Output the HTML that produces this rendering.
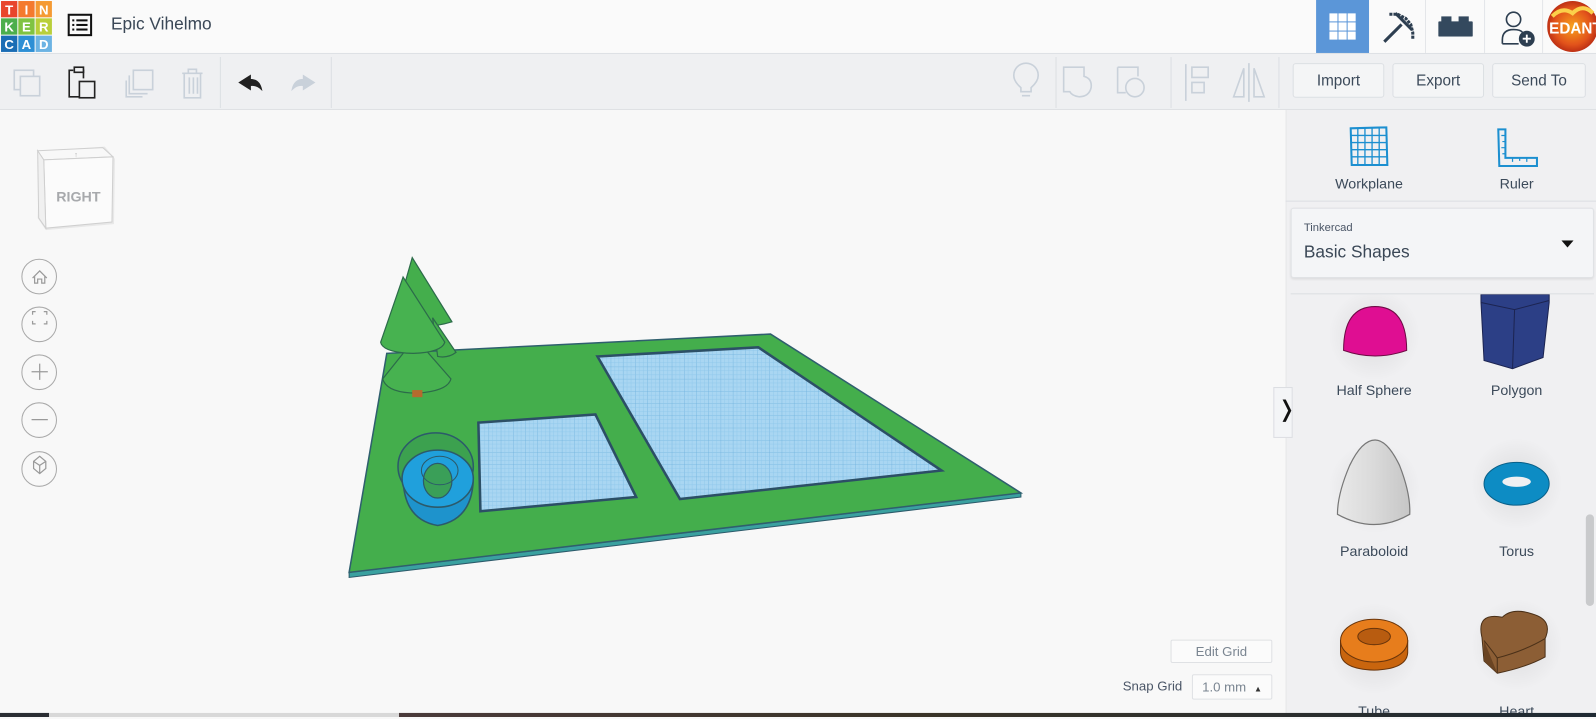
<!DOCTYPE html>
<html><head><meta charset="utf-8"><style>
html,body{margin:0;padding:0;width:1596px;height:717px;overflow:hidden;background:#f8f8f8;font-family:"Liberation Sans","DejaVu Sans",sans-serif}
#w{position:absolute;left:0;top:0;width:1568px;height:704px;transform:scale(1.017857,1.018466);transform-origin:0 0;background:#f8f8f8}
.a{position:absolute}
.btn{position:absolute;top:62px;height:34px;border:1px solid #dcdfe3;border-radius:3px;background:#f4f5f6;color:#3c4a5a;font-size:15px;text-align:center;line-height:34px;box-sizing:border-box}
.lbl{position:absolute;font-size:14px;color:#3c4a5a;text-align:center;width:140px}
.nav{position:absolute;left:21px;width:35px;height:35px;border:1px solid #a9a9a9;border-radius:50%;box-sizing:border-box}
</style></head><body><div id="w">
<!-- header -->
<div class="a" style="left:0;top:0;width:1568px;height:52px;background:#fafafa;border-bottom:1px solid #dde0e4"></div>
<svg class="a" style="left:0;top:0" width="52" height="52" font-family="Liberation Sans" font-weight="bold" font-size="13" fill="#fff" text-anchor="middle">
<rect x="1" y="1" width="16" height="16" fill="#e8452c"/><rect x="18" y="1" width="16" height="16" fill="#f47a2e"/><rect x="35" y="1" width="16" height="16" fill="#f59a33"/>
<rect x="1" y="18" width="16" height="16" fill="#4cae4c"/><rect x="18" y="18" width="16" height="16" fill="#80c342"/><rect x="35" y="18" width="16" height="16" fill="#b9cf3a"/>
<rect x="1" y="35" width="16" height="16" fill="#1a6db5"/><rect x="18" y="35" width="16" height="16" fill="#2d8fd5"/><rect x="35" y="35" width="16" height="16" fill="#6cb3e3"/>
<text x="9" y="14">T</text><text x="26" y="14">I</text><text x="43" y="14">N</text><text x="9" y="31">K</text><text x="26" y="31">E</text><text x="43" y="31">R</text><text x="9" y="48">C</text><text x="26" y="48">A</text><text x="43" y="48">D</text></svg>
<svg class="a" style="left:66px;top:13px" width="26" height="24"><rect x="1.5" y="1.5" width="22" height="20" fill="none" stroke="#111" stroke-width="2"/><g fill="#111"><rect x="5" y="6" width="2" height="2"/><rect x="9" y="6" width="11" height="2"/><rect x="5" y="10.5" width="2" height="2"/><rect x="9" y="10.5" width="11" height="2"/><rect x="5" y="15" width="2" height="2"/><rect x="9" y="15" width="11" height="2"/></g></svg>
<div class="a" style="left:109px;top:14px;font-size:17px;color:#3a4756">Epic Vihelmo</div>
<div class="a" style="left:1293px;top:0;width:52px;height:52px;background:#5b96d8"></div>
<svg class="a" style="left:1306px;top:13px" width="26" height="26" fill="#fff"><rect x="0" y="0" width="8" height="8"/><rect x="9" y="0" width="8" height="8"/><rect x="18" y="0" width="8" height="8"/><rect x="0" y="9" width="8" height="8"/><rect x="9" y="9" width="8" height="8"/><rect x="18" y="9" width="8" height="8"/><rect x="0" y="18" width="8" height="8"/><rect x="9" y="18" width="8" height="8"/><rect x="18" y="18" width="8" height="8"/></svg>
<div class="a" style="left:1400px;top:0;width:1px;height:52px;background:#e4e6e9"></div>
<div class="a" style="left:1458px;top:0;width:1px;height:52px;background:#e4e6e9"></div>
<div class="a" style="left:1515px;top:0;width:1px;height:52px;background:#e4e6e9"></div>
<svg class="a" style="left:1357px;top:10px" width="34" height="34" fill="none" stroke="#2d3e50" stroke-width="3"><path d="M3 31 L20 14"/><path d="M8 4 L16 4 L24 8 L29 14 L31 22 L31 28" stroke-dasharray="3 1"/><path d="M14 3 L30 19"/></svg>
<svg class="a" style="left:1413px;top:16px" width="34" height="20" fill="#34495e"><rect x="0" y="5" width="34" height="15" rx="1"/><rect x="3" y="0" width="10" height="7"/><rect x="20" y="0" width="10" height="7"/></svg>
<svg class="a" style="left:1474px;top:10px" width="36" height="36" fill="none" stroke="#2d3e50" stroke-width="1.6"><circle cx="13" cy="9" r="7"/><path d="M2 33 L2 29 Q2 19 13 19 Q20 19 22 22"/><path d="M2 33 L18 33"/><circle cx="26" cy="28" r="7" fill="#2d3e50"/><path d="M26 24 V32 M22 28 H30" stroke="#fff" stroke-width="1.8"/></svg>
<svg class="a" style="left:1520px;top:1px" width="50" height="50"><defs><radialGradient id="fire" cx=".5" cy=".5" r=".6"><stop offset="0" stop-color="#f7a21c"/><stop offset=".6" stop-color="#e2531b"/><stop offset="1" stop-color="#a3170f"/></radialGradient></defs><circle cx="25" cy="25" r="25" fill="url(#fire)"/><path d="M5 15 Q15 5 25 12 Q35 2 45 12" stroke="#fbd04a" stroke-width="4" fill="none"/><text x="2" y="32" font-family="Liberation Sans" font-weight="bold" font-size="15" fill="#fff">EDANT</text></svg>
<!-- toolbar -->
<div class="a" style="left:0;top:53px;width:1568px;height:54px;background:#eff0f2;border-bottom:1px solid #dfe1e4"></div>
<div class="a" style="left:216px;top:56px;width:1px;height:50px;background:#dcdfe3"></div>
<div class="a" style="left:325px;top:56px;width:1px;height:50px;background:#dcdfe3"></div>
<div class="a" style="left:1037px;top:56px;width:1px;height:50px;background:#dcdfe3"></div>
<div class="a" style="left:1150px;top:56px;width:1px;height:50px;background:#dcdfe3"></div>
<div class="a" style="left:1256px;top:56px;width:1px;height:50px;background:#dcdfe3"></div>
<svg class="a" style="left:0;top:53px" width="330" height="54" fill="none" stroke-width="1.6">
<g stroke="#c9d1da"><rect x="14" y="16" width="19" height="19"/><rect x="20" y="22" width="19" height="19" fill="#eff0f2"/></g>
<g stroke="#222"><path d="M72 16 H68 V42 H78"/><path d="M82 24 V16 H78"/><rect x="73" y="13" width="9" height="5" fill="#eff0f2"/><rect x="78" y="27" width="15" height="16"/></g>
<g stroke="#c9d1da"><rect x="131" y="16" width="19" height="19"/><path d="M127 21 V39 H145"/><path d="M124 26 V42 H140"/></g>
<g stroke="#c9d1da"><path d="M179 19 H199 M185 19 V15 H193 V19 M181 19 V43 H197 V19 M186 23 V39 M190 23 V39 M194 23 V39"/></g>
<path d="M235 28 L246 21 V25 Q255 25 257 35 Q252 30 246 31 V35 Z" fill="#222" stroke="#222" stroke-width="1"/>
<path d="M309 28 L298 21 V25 Q289 25 287 35 Q292 30 298 31 V35 Z" fill="#c9d1da" stroke="#c9d1da" stroke-width="1"/>
</svg>
<svg class="a" style="left:990px;top:53px" width="270" height="54" fill="none" stroke="#c9d1da" stroke-width="1.6">
<path d="M13 33 Q6 27 6 21 A12 12 0 0 1 30 21 Q30 27 23 33 V37 H13 Z M14 41 H22"/>
<path d="M55 13 H75 V22 Q83 24 82 33 Q80 42 70 42 Q63 41 61 37 H55 Z"/>
<path d="M108 13 H128 V22 M108 13 V38 H116"/><circle cx="125" cy="33" r="9"/>
<path d="M175 10 V46 M181 13 H197 V23 H181 Z M181 28 H193 V38 H181 Z"/>
<path d="M237 9 V47 M232 14 L222 42 H232 Z M242 14 L252 42 H242 Z"/>
</svg>
<div class="btn" style="left:1270px;width:90px">Import</div>
<div class="btn" style="left:1368px;width:90px">Export</div>
<div class="btn" style="left:1466px;width:92px">Send To</div>
<!-- sidebar -->
<div class="a" style="left:1263px;top:108px;width:305px;height:592px;background:#f0f0f2;border-left:1px solid #e6e7e9"></div>
<svg class="a" style="left:1325px;top:124px" width="40" height="40" fill="none" stroke="#1c8fd0" stroke-width="1.3"><path d="M2 2 L37 1 L38 38 L3 38 Z" stroke-width="2"/><path d="M9 2 V38 M16 2 V38 M23 1.5 V38 M30 1.5 V38 M2 9 H37 M2 16 H37 M2 23 H38 M3 30 H38"/></svg>
<svg class="a" style="left:1470px;top:125px" width="42" height="40" fill="none" stroke="#1c8fd0" stroke-width="2"><path d="M2 2 H9 V30 H40 V38 H3 Z"/><path d="M9 8 H5 M9 14 H6 M9 20 H5 M9 26 H6 M16 30 V34 M23 30 V33 M30 30 V34" stroke-width="1.2"/></svg>
<div class="lbl" style="left:1275px;top:172px">Workplane</div>
<div class="lbl" style="left:1420px;top:172px">Ruler</div>
<div class="a" style="left:1263px;top:197px;width:305px;height:1px;background:#dcdee2"></div>
<div class="a" style="left:1268px;top:204px;width:298px;height:69px;background:#f4f5f7;border:1px solid #e0e2e5;border-radius:3px;box-sizing:border-box;box-shadow:0 1px 2px rgba(0,0,0,.08)"></div>
<div class="a" style="left:1281px;top:218px;font-size:11px;color:#4a5566">Tinkercad</div>
<div class="a" style="left:1281px;top:238px;font-size:17px;color:#3a4756">Basic Shapes</div>
<svg class="a" style="left:1534px;top:236px" width="12" height="8"><path d="M0 0 H12 L6 7 Z" fill="#111"/></svg>
<div class="a" style="left:1268px;top:288px;width:298px;height:1px;background:#dcdee2"></div>
<div class="a" style="left:1251px;top:380px;width:19px;height:50px;background:#f4f5f7;border:1px solid #dcdee2;box-sizing:border-box"></div>
<div class="a" style="left:1255px;top:389px;font-size:22px;color:#111">❭</div>
<svg class="a" style="left:1268px;top:289px" width="300" height="411">
<defs>
<radialGradient id="sh"><stop offset="0" stop-color="#000" stop-opacity=".09"/><stop offset="1" stop-color="#000" stop-opacity="0"/></radialGradient>
<linearGradient id="pg" x1="0" x2="1"><stop offset="0" stop-color="#e9e9e9"/><stop offset=".5" stop-color="#dadada"/><stop offset="1" stop-color="#c6c6c6"/></linearGradient>
</defs>
<circle cx="82" cy="190" r="45" fill="url(#sh)"/><circle cx="222" cy="186" r="45" fill="url(#sh)"/>
<circle cx="82" cy="348" r="45" fill="url(#sh)"/><circle cx="222" cy="344" r="45" fill="url(#sh)"/>
<circle cx="82" cy="40" r="45" fill="url(#sh)"/>
<path d="M52 55 Q52 12 83 12 Q114 12 114 55 Q83 66 52 55 Z" fill="#df0e92" stroke="#6e0b45" stroke-width="1"/>
<path d="M187 0 L187 8 L190 65 L218 73 L248 62 L254 8 L254 0 Z" fill="#2c3f86" stroke="#1c2451" stroke-width="1"/>
<path d="M187 8 L220 15 L254 6 M220 15 L218 73" fill="none" stroke="#1c2451" stroke-width="1"/>
<path d="M46 216 Q46 196 58 168 Q70 143 83 143 Q95 143 107 168 Q118 196 117 216 Q82 236 46 216 Z" fill="url(#pg)" stroke="#777" stroke-width="1.2"/>
<ellipse cx="222" cy="186" rx="32" ry="21" fill="#0d8cc4" stroke="#085f88"/><ellipse cx="222" cy="184" rx="14" ry="5" fill="#f0f0f2"/>
<path d="M49 340 L49 352 Q50 368 82 369 Q114 368 115 352 L115 340 Z" fill="#c9650e" stroke="#6a350b"/>
<ellipse cx="82" cy="340" rx="33" ry="21" fill="#e77d1c" stroke="#6a350b"/><ellipse cx="82" cy="336" rx="16" ry="8" fill="#b85c10" stroke="#6a350b"/>
<path d="M188 337 Q182 312 208 317 Q218 307 238 314 Q258 320 250 338 L250 356 Q232 366 203 372 L190 360 Z" fill="#8c5e35" stroke="#4a3018"/>
<path d="M190 340 Q198 350 203 357 Q230 350 250 338" fill="none" stroke="#4a3018"/>
<path d="M203 357 V372" stroke="#4a3018"/>
<path d="M190 340 L190 360 L203 372 Z" fill="#6a4423"/>
</svg>
<div class="lbl" style="left:1280px;top:375px">Half Sphere</div>
<div class="lbl" style="left:1420px;top:375px">Polygon</div>
<div class="lbl" style="left:1280px;top:533px">Paraboloid</div>
<div class="lbl" style="left:1420px;top:533px">Torus</div>
<div class="lbl" style="left:1280px;top:690px">Tube</div>
<div class="lbl" style="left:1420px;top:690px">Heart</div>
<div class="a" style="left:1558px;top:505px;width:8px;height:90px;border-radius:4px;background:#c9cacc"></div>
<!-- nav -->
<svg class="a" style="left:33px;top:140px" width="84" height="92">
<path d="M6 8 L70 4 L80 16 L79 80 L12 86 L4 74 Z" fill="#e8e8e8"/>
<path d="M4 8 L68 5 L78 14 L10 17 Z" fill="#f8f8f8" stroke="#cfcfcf"/>
<path d="M10 17 L78 14 L77 78 L12 84 Z" fill="#fbfbfb" stroke="#cfcfcf"/>
<path d="M4 8 L10 17 L12 84 L5 74 Z" fill="#f0f0f0" stroke="#cfcfcf"/>
<text x="44" y="58" font-family="Liberation Sans" font-weight="bold" font-size="14" fill="#a7a9ac" text-anchor="middle">RIGHT</text>
<text x="40" y="14" font-family="Liberation Sans" font-size="7" fill="#aaa">↑</text>
</svg>
<div class="nav" style="top:254px"></div><div class="nav" style="top:301px"></div><div class="nav" style="top:348px"></div><div class="nav" style="top:395px"></div><div class="nav" style="top:443px"></div>
<svg class="a" style="left:21px;top:254px" width="36" height="225" fill="none" stroke="#9a9a9a" stroke-width="1.2">
<path d="M11 19 L18 12 L25 19 M13 17 V24 H16 V20 H20 V24 H23 V17"/>
<path d="M11 55 V52 H14 M22 52 H25 V55 M25 61 V64 H22 M14 64 H11 V61"/>
<path d="M18 103 V119 M10 111 H26"/>
<path d="M10 158 H26"/>
<path d="M12 199 L18 194 L24 199 L24 206 L18 211 L12 206 Z M12 199 L18 203 L24 199 M18 203 V211"/>
</svg>
<!-- grid controls -->
<div class="a" style="left:1150px;top:628px;width:100px;height:23px;border:1px solid #dfe1e4;background:#fbfbfb;box-sizing:border-box;font-size:13px;color:#7a8591;text-align:center;line-height:21px;border-radius:2px">Edit Grid</div>
<div class="a" style="left:1103px;top:666px;font-size:13px;color:#4a5566">Snap Grid</div>
<div class="a" style="left:1171px;top:662px;width:79px;height:25px;border:1px solid #dfe1e4;background:#fbfbfb;box-sizing:border-box;font-size:13px;color:#7a8591;line-height:23px;padding-left:9px;border-radius:2px">1.0 mm <span style="font-size:8px;color:#333;margin-left:4px">▲</span></div>
<!-- bottom bar -->
<div class="a" style="left:0;top:700px;width:1568px;height:4px;background:linear-gradient(90deg,#2a2d33 0,#2a2d33 48px,#d8d8d8 48px,#d8d8d8 392px,#4a3a3a 392px,#3a3428 900px,#1f2a33 1568px)"></div>
<!-- scene -->
<svg class="a" style="left:0;top:108px" width="1250" height="592" viewBox="0 108 1250 592">
<defs>
<pattern id="g1" width="12" height="12" patternUnits="userSpaceOnUse"><rect width="12" height="12" fill="#a9d6f2"/><path d="M0 0 H12 M0 0 V12" stroke="#6fb2de" stroke-width="0.8"/><path d="M0 4 H12 M0 8 H12 M4 0 V12 M8 0 V12" stroke="#8cc6ea" stroke-width="0.4"/></pattern>
</defs>
<path d="M343 562 L1003 484 L1003 488 L343 567 Z" fill="#3aa1a0" stroke="#2c5a6a" stroke-width="1"/>
<path d="M380 347 L757 328 L1003 484 L343 562 Z" fill="#44ae4c" stroke="#2f5f6e" stroke-width="1.5"/>
<path d="M587 350 L745 341 L925 462 L668 490 Z" fill="url(#g1)" stroke="#2c4f66" stroke-width="2.5"/>
<path d="M470 415 L585 407 L625 488 L472 502 Z" fill="url(#g1)" stroke="#2c4f66" stroke-width="2.5"/>
<!-- back tree -->
<path d="M405 253 L387 316 Q415 325 444 316 Z" fill="#44ae4c" stroke="#2c6b4a" stroke-width="1.2"/>
<path d="M425 312 L448 346 Q440 352 430 350 Z" fill="#44ae4c" stroke="#2c6b4a" stroke-width="1.2"/>
<!-- front tree -->
<path d="M408 332 L376 372 Q380 386 410 386 Q440 384 443 372 Z" fill="#47b250" stroke="#2c6b4a" stroke-width="1.2"/>
<path d="M396 272 L374 336 Q376 346 406 347 Q434 346 437 336 Z" fill="#47b250" stroke="#2c6b4a" stroke-width="1.2"/>
<rect x="405" y="383" width="10" height="7" fill="#b66a2e"/>
<!-- torus -->
<ellipse cx="428" cy="458" rx="37" ry="33" fill="#2f8a56" fill-opacity=".35" stroke="#2c5a6a" stroke-width="1.5"/>
<path d="M396 468 Q396 510 430 516 Q465 510 465 468" fill="#1e93cc" stroke="#2c5a6a" stroke-width="1.5"/>
<ellipse cx="430" cy="470" rx="35" ry="28" fill="#20a0dc" stroke="#2c5a6a" stroke-width="1.5"/>
<ellipse cx="430" cy="472" rx="14" ry="17" fill="#3a9f58" stroke="#2c5a6a" stroke-width="1.2"/>
<ellipse cx="432" cy="462" rx="18" ry="14" fill="none" stroke="#2c5a6a" stroke-width="1"/>
</svg>
</div></body></html>
